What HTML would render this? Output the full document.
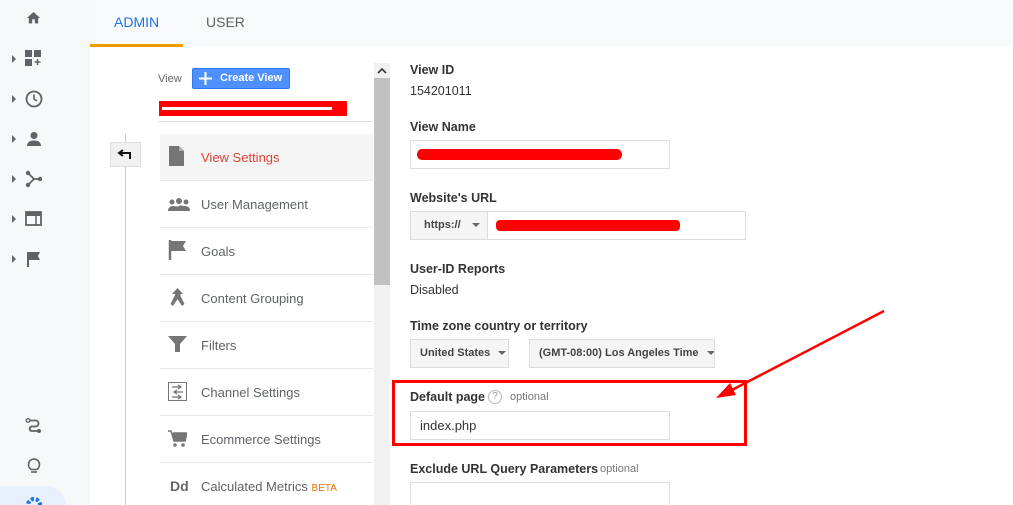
<!DOCTYPE html>
<html><head><meta charset="utf-8"><style>
*{box-sizing:border-box;margin:0;padding:0}
html,body{width:1013px;height:505px;overflow:hidden}
body{background:#fff;font-family:"Liberation Sans",Arial,sans-serif;position:relative}
.abs{position:absolute}
.side{left:0;top:0;width:90px;height:505px;background:#f6f8fa}
.top{left:90px;top:0;width:923px;height:46px;background:#f8f9fa}
.tab{top:14px;font-size:14px;color:#5f6368}
.lbl{left:410px;font-size:12.5px;font-weight:bold;color:#333;white-space:nowrap}
.val{left:410px;font-size:12.5px;color:#333}
.inp{background:#fff;border:1px solid #ddd}
.sel{background:#f5f5f5;border:1px solid #ddd;font-size:11px;font-weight:bold;color:#444;padding-left:9px;line-height:27px;white-space:nowrap;overflow:hidden}
.caret{display:inline-block;width:0;height:0;border-left:4px solid transparent;border-right:4px solid transparent;border-top:4px solid #666;vertical-align:middle;margin-left:8px}
.item{left:160px;width:213px;height:47px;border-bottom:1px solid #e8e8e8;font-size:13px;color:#5f6368}
.item span{position:absolute;left:41px;top:16px;white-space:nowrap}
.item svg{position:absolute;left:8px;top:12px}
.tri{width:0;height:0;border-top:4px solid transparent;border-bottom:4px solid transparent;border-left:4px solid #666}
.red{background:#f00;height:11px}
</style></head><body>
<div class="abs side"></div>
<div class="abs top"></div>
<div class="abs tab" style="left:114px;color:#1a73e8">ADMIN</div>
<div class="abs tab" style="left:206px">USER</div>
<div class="abs" style="left:90px;top:44px;width:93px;height:3px;background:#f29900"></div>

<svg class="abs" style="left:25px;top:10px" width="17" height="16" viewBox="0 0 24 24"><path d="M10 20v-6h4v6h5v-8h3L12 3 2 12h3v8z" fill="#5f6368"/></svg>
<div class="abs tri" style="left:12px;top:55px"></div>
<svg class="abs" style="left:25px;top:50px" width="17" height="17" viewBox="0 0 17 17"><rect x="0" y="0" width="7" height="7" fill="#5f6368"/><rect x="9" y="0" width="7" height="7" fill="#5f6368"/><rect x="0" y="9" width="7" height="7" fill="#5f6368"/><path d="M12.5 9v6M9.5 12h6" stroke="#5f6368" stroke-width="1.5"/></svg>
<div class="abs tri" style="left:12px;top:95px"></div>
<svg class="abs" style="left:25px;top:90px" width="18" height="18" viewBox="0 0 18 18"><circle cx="9" cy="9" r="7.5" fill="none" stroke="#5f6368" stroke-width="1.8"/><path d="M9 4.5V9l3 2" fill="none" stroke="#5f6368" stroke-width="1.6"/></svg>
<div class="abs tri" style="left:12px;top:135px"></div>
<svg class="abs" style="left:26px;top:131px" width="16" height="16" viewBox="0 0 16 16"><circle cx="8" cy="4.5" r="3.5" fill="#5f6368"/><path d="M1 15c0-4 3-5.5 7-5.5s7 1.5 7 5.5z" fill="#5f6368"/></svg>
<div class="abs tri" style="left:12px;top:175px"></div>
<svg class="abs" style="left:25px;top:170px" width="18" height="18" viewBox="0 0 18 18"><circle cx="3" cy="3" r="2.2" fill="#5f6368"/><circle cx="3" cy="15" r="2.2" fill="#5f6368"/><circle cx="15" cy="9" r="2.2" fill="#5f6368"/><path d="M3 3l6 6h6M3 15l6-6" stroke="#5f6368" stroke-width="1.8" fill="none"/></svg>
<div class="abs tri" style="left:12px;top:215px"></div>
<svg class="abs" style="left:25px;top:211px" width="17" height="15" viewBox="0 0 17 15"><rect x="1" y="1" width="15" height="13" fill="none" stroke="#5f6368" stroke-width="1.8"/><rect x="1" y="1" width="15" height="4" fill="#5f6368"/><path d="M11 5v9" stroke="#5f6368" stroke-width="1.5"/></svg>
<div class="abs tri" style="left:12px;top:255px"></div>
<svg class="abs" style="left:27px;top:251px" width="14" height="16" viewBox="0 0 14 16"><path d="M1 1v15" stroke="#5f6368" stroke-width="2"/><path d="M2 1h11l-2 4 2 4H2z" fill="#5f6368"/></svg>
<svg class="abs" style="left:25px;top:418px" width="18" height="16" viewBox="0 0 18 16"><circle cx="3" cy="2.5" r="1.8" fill="none" stroke="#5f6368" stroke-width="1.3"/><circle cx="14" cy="13" r="2" fill="#5f6368"/><path d="M4.5 2.5h6a3 3 0 010 6h-4a2.3 2.3 0 000 4.5H12" fill="none" stroke="#5f6368" stroke-width="1.8"/></svg>
<svg class="abs" style="left:27px;top:457px" width="14" height="18" viewBox="0 0 14 18"><path d="M4 12.5C2.5 11.3 1.5 9.7 1.5 7.5a5.5 5.5 0 0111 0c0 2.2-1 3.8-2.5 5z" fill="none" stroke="#5f6368" stroke-width="1.6"/><path d="M4 15h6" stroke="#5f6368" stroke-width="1.6"/></svg>
<div class="abs" style="left:0;top:486px;width:66px;height:19px;background:#e8f0fe;border-radius:0 20px 0 0"></div>
<svg class="abs" style="left:25px;top:496px" width="18" height="9" viewBox="0 0 18 9"><circle cx="9" cy="9" r="6" fill="none" stroke="#1a73e8" stroke-width="4" stroke-dasharray="3 2"/></svg>

<div class="abs" style="left:158px;top:73px;font-size:11px;color:#666">View</div>
<div class="abs" style="left:192px;top:68px;width:98px;height:21px;background:#4d90fe;border:1px solid #3079ed;border-radius:2px;color:#fff;font-size:11px;font-weight:bold;line-height:19px;padding-left:27px">Create View</div>
<svg class="abs" style="left:199px;top:72px" width="13" height="13" viewBox="0 0 13 13"><path d="M6.5 0v13M0 6.5h13" stroke="#fff" stroke-width="2"/></svg>
<div class="abs" style="left:159px;top:101px;width:188px;height:15px;background:#f00"><div style="margin:6px 8px 0 3px;height:3px;background:#fff;width:170px"></div></div>
<div class="abs" style="left:158px;top:121px;width:215px;height:1px;background:#ddd"></div>
<div class="abs" style="left:125px;top:134px;width:1px;height:371px;background:#ccc"></div>
<div class="abs" style="left:110px;top:142px;width:31px;height:25px;background:#f1f1f1;border:1px solid #ddd"></div>
<svg class="abs" style="left:117px;top:149px" width="16" height="10" viewBox="0 0 16 10"><path d="M13 10V4H3M6 1L2 4l4 3" fill="none" stroke="#111" stroke-width="2"/></svg>

<div class="abs item" style="top:134px;background:#f5f5f5"><svg width="17" height="20" viewBox="0 0 17 20"><path d="M1 0h10l5 5v15H1z" fill="#757575"/><path d="M11 0v5h5" fill="#aaa"/></svg><span style="color:#db4437">View Settings</span></div>
<div class="abs item" style="top:181px"><svg width="22" height="20" viewBox="0 0 22 20"><circle cx="4" cy="9" r="2.5" fill="#757575"/><circle cx="11" cy="8" r="3" fill="#757575"/><circle cx="18" cy="9" r="2.5" fill="#757575"/><path d="M0 18c0-4 3-5 5-5s5 1 6 0 4 0 6 0 5 1 5 5z" fill="#757575"/></svg><span>User Management</span></div>
<div class="abs item" style="top:228px"><svg width="20" height="20" viewBox="0 0 20 20"><path d="M2 0v20" stroke="#757575" stroke-width="2.5"/><path d="M3 1h15l-3 5 3 5H3z" fill="#757575"/></svg><span>Goals</span></div>
<div class="abs item" style="top:275px"><svg width="19" height="20" viewBox="0 0 19 20"><path d="M9.5 1L4 7h3.5l-5 10 2.5 2 4.5-7 4.5 7 2.5-2-4-8V7H15z" fill="#757575"/></svg><span>Content Grouping</span></div>
<div class="abs item" style="top:322px"><svg width="19" height="20" viewBox="0 0 19 20"><path d="M0 2h19l-7 8v8h-5v-8z" fill="#757575"/></svg><span>Filters</span></div>
<div class="abs item" style="top:369px"><svg width="19" height="20" viewBox="0 0 19 20"><rect x="0.5" y="1.5" width="18" height="18" fill="none" stroke="#757575"/><path d="M4 6h9M10 4l3 2-3 2M15 11H6M9 9l-3 2 3 2M4 16h9M10 14l3 2-3 2" fill="none" stroke="#757575" stroke-width="1.3"/></svg><span>Channel Settings</span></div>
<div class="abs item" style="top:416px"><svg width="19" height="20" viewBox="0 0 19 20"><path d="M0 3h3l3 10h11l2-8H5" fill="#757575" stroke="#757575" stroke-width="1.5"/><circle cx="7" cy="17" r="1.8" fill="#757575"/><circle cx="15" cy="17" r="1.8" fill="#757575"/></svg><span>Ecommerce Settings</span></div>
<div class="abs item" style="top:463px;height:42px;border:0"><span style="left:10px;font-weight:bold;font-size:14px;color:#666;top:15px">Dd</span><span>Calculated Metrics <b style="font-weight:normal;font-size:10px;color:#e8710a">BETA</b></span></div>

<div class="abs" style="left:374px;top:63px;width:16px;height:442px;background:#f1f1f1"></div>
<div class="abs" style="left:374px;top:78px;width:16px;height:207px;background:#c1c1c1"></div>
<svg class="abs" style="left:377px;top:67px" width="10" height="7" viewBox="0 0 10 7"><path d="M1 6l4-4 4 4" fill="none" stroke="#333" stroke-width="1.6"/></svg>

<div class="abs lbl" style="top:63px">View ID</div>
<div class="abs val" style="top:84px">154201011</div>
<div class="abs lbl" style="top:120px">View Name</div>
<div class="abs inp" style="left:410px;top:140px;width:260px;height:29px"></div>
<div class="abs red" style="left:417px;top:149px;width:205px;border-radius:5px"></div>
<div class="abs lbl" style="top:191px">Website's URL</div>
<div class="abs sel" style="left:410px;top:211px;width:78px;height:29px;padding-left:13px">https:// <i class="caret"></i></div>
<div class="abs inp" style="left:487px;top:211px;width:259px;height:29px"></div>
<div class="abs red" style="left:496px;top:220px;width:184px;border-radius:4px"></div>
<div class="abs lbl" style="top:262px">User-ID Reports</div>
<div class="abs val" style="top:283px">Disabled</div>
<div class="abs lbl" style="top:319px">Time zone country or territory</div>
<div class="abs sel" style="left:410px;top:339px;width:99px;height:29px">United States<i class="caret"></i></div>
<div class="abs sel" style="left:529px;top:339px;width:186px;height:29px">(GMT-08:00) Los Angeles Time<i class="caret"></i></div>
<div class="abs lbl" style="top:390px">Default page</div>
<div class="abs" style="left:488px;top:390px;width:14px;height:14px;border:1px solid #bbb;border-radius:50%;font-size:10px;color:#999;text-align:center;line-height:12px">?</div>
<div class="abs" style="left:510px;top:391px;font-size:11px;color:#777">optional</div>
<div class="abs inp" style="left:410px;top:411px;width:260px;height:29px;font-size:13px;color:#333;padding:6px 0 0 9px">index.php</div>
<div class="abs" style="left:392px;top:380px;width:355px;height:66px;border:3px solid #f00"></div>
<div class="abs lbl" style="top:462px">Exclude URL Query Parameters</div>
<div class="abs" style="left:600px;top:463px;font-size:11px;color:#777">optional</div>
<div class="abs inp" style="left:410px;top:482px;width:260px;height:30px"></div>

<svg class="abs" style="left:700px;top:300px" width="200" height="110" viewBox="0 0 200 110"><path d="M184 11L28 92" stroke="#f00" stroke-width="2.5"/><path d="M16 98l14-15 6 12z" fill="#f00"/></svg>
</body></html>
